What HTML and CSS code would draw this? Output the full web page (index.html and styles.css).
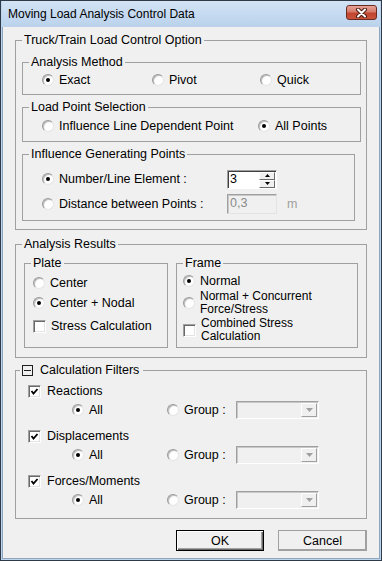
FILE: index.html
```html
<!DOCTYPE html>
<html lang="en">
<head>
    <meta charset="UTF-8">
    <title>Moving Load Analysis Control Data</title>
    <link rel="stylesheet" href="styles.css">
</head>
<body>
    <div class="window">
        <div class="titlebar">
            <span class="title">Moving Load Analysis Control Data</span>
            <span class="close">
                <svg width="13" height="10" viewBox="0 0 13 10">
                    <path d="M3 1.5 L10 8.5 M10 1.5 L3 8.5" stroke="#4a1a12" stroke-width="4" stroke-linecap="round"/>
                    <path d="M3 1.5 L10 8.5 M10 1.5 L3 8.5" stroke="#fff" stroke-width="2" stroke-linecap="round"/>
                </svg>
            </span>
        </div>

        <div class="client">
            <!-- Truck/Train -->
            <div class="group g-truck">
                <div class="group-title">Truck/Train Load Control Option</div>

                <div class="group g-method">
                    <div class="group-title">Analysis Method</div>
                    <div class="row method-row">
                        <span class="opt"><span class="radio on"></span>Exact</span>
                        <span class="opt"><span class="radio"></span>Pivot</span>
                        <span class="opt"><span class="radio"></span>Quick</span>
                    </div>
                </div>

                <div class="group g-loadpt">
                    <div class="group-title">Load Point Selection</div>
                    <div class="row loadpt-row">
                        <span class="opt"><span class="radio"></span>Influence Line Dependent Point</span>
                        <span class="opt"><span class="radio on"></span>All Points</span>
                    </div>
                </div>

                <div class="group g-infl">
                    <div class="group-title">Influence Generating Points</div>
                    <div class="infl-row first">
                        <span class="opt"><span class="radio on"></span>Number/Line Element :</span>
                        <span class="spin">
                            <span class="spin-val">3</span>
                            <span class="spin-btns">
                                <span class="spin-btn"><svg width="5" height="3" viewBox="0 0 5 3"><path d="M2.5 0 L5 3 L0 3 Z" fill="#000"/></svg></span>
                                <span class="spin-btn"><svg width="5" height="3" viewBox="0 0 5 3"><path d="M0 0 L5 0 L2.5 3 Z" fill="#000"/></svg></span>
                            </span>
                        </span>
                    </div>
                    <div class="infl-row">
                        <span class="opt"><span class="radio"></span>Distance between Points :</span>
                        <span class="edit-off">0,3</span>
                        <span class="unit">m</span>
                    </div>
                </div>
            </div>

            <!-- Analysis Results -->
            <div class="group g-results">
                <div class="group-title">Analysis Results</div>
                <div class="results-cols">
                    <div class="group g-plate">
                        <div class="group-title">Plate</div>
                        <div class="opt plate-center"><span class="radio"></span>Center</div>
                        <div class="opt plate-nodal"><span class="radio on"></span>Center + Nodal</div>
                        <div class="opt plate-stress"><span class="check"></span>Stress Calculation</div>
                    </div>
                    <div class="group g-frame">
                        <div class="group-title">Frame</div>
                        <div class="opt frame-normal"><span class="radio on"></span>Normal</div>
                        <div class="opt two-line">
                            <span class="radio"></span>
                            <span class="lines"><span class="line">Normal + Concurrent</span><span class="line">Force/Stress</span></span>
                        </div>
                        <div class="opt two-line second">
                            <span class="check"></span>
                            <span class="lines"><span class="line">Combined Stress</span><span class="line">Calculation</span></span>
                        </div>
                    </div>
                </div>
            </div>

            <!-- Calculation Filters -->
            <div class="group g-filter">
                <div class="group-title filter-title"><span class="collapse"></span>Calculation Filters</div>

                <div class="opt filter-check first"><span class="check on"><svg width="9" height="9" viewBox="0 0 9 9"><path d="M1.5 4 L3.5 6.5 L7.5 2" fill="none" stroke="#000" stroke-width="1.8"/></svg></span>Reactions</div>
                <div class="filter-opts">
                    <span class="opt"><span class="radio on"></span>All</span>
                    <span class="opt"><span class="radio"></span>Group :</span>
                    <span class="combo"><span class="combo-btn"><svg width="7" height="4" viewBox="0 0 7 4"><path d="M0 0 L7 0 L3.5 4 Z" fill="#a0a0a0"/></svg></span></span>
                </div>

                <div class="opt filter-check"><span class="check on"><svg width="9" height="9" viewBox="0 0 9 9"><path d="M1.5 4 L3.5 6.5 L7.5 2" fill="none" stroke="#000" stroke-width="1.8"/></svg></span>Displacements</div>
                <div class="filter-opts">
                    <span class="opt"><span class="radio on"></span>All</span>
                    <span class="opt"><span class="radio"></span>Group :</span>
                    <span class="combo"><span class="combo-btn"><svg width="7" height="4" viewBox="0 0 7 4"><path d="M0 0 L7 0 L3.5 4 Z" fill="#a0a0a0"/></svg></span></span>
                </div>

                <div class="opt filter-check"><span class="check on"><svg width="9" height="9" viewBox="0 0 9 9"><path d="M1.5 4 L3.5 6.5 L7.5 2" fill="none" stroke="#000" stroke-width="1.8"/></svg></span>Forces/Moments</div>
                <div class="filter-opts">
                    <span class="opt"><span class="radio on"></span>All</span>
                    <span class="opt"><span class="radio"></span>Group :</span>
                    <span class="combo"><span class="combo-btn"><svg width="7" height="4" viewBox="0 0 7 4"><path d="M0 0 L7 0 L3.5 4 Z" fill="#a0a0a0"/></svg></span></span>
                </div>
            </div>

            <div class="buttons">
                <button class="btn btn-default">OK</button>
                <button class="btn btn-cancel">Cancel</button>
            </div>
        </div>
    </div>
</body>
</html>
```

FILE: styles.css
```css
* {
    box-sizing: border-box;
}

body {
    margin: 0;
    font-family: "Liberation Sans", Arial, sans-serif;
    font-size: 12.5px;
    color: #000;
    background: #fff;
}

.window {
    width: 382px;
    height: 561px;
    display: flex;
    flex-direction: column;
    padding: 0 1px 1px;
    border: 1px solid #2e3a47;
    background: #bcd4ed;
}

.titlebar {
    height: 26px;
    display: flex;
    align-items: center;
    padding-left: 6px;
    background: linear-gradient(#d2e3f5, #bad2ec);
}

.title {
    font-size: 12px;
}

.close {
    align-self: flex-start;
    width: 31px;
    height: 15px;
    margin: 4px 3px 0 auto;
    display: flex;
    align-items: center;
    justify-content: center;
    border: 1px solid #6b2a20;
    border-radius: 3px;
    background: linear-gradient(#e5a497, #d57a69 45%, #c2462f 55%, #c9533b);
}

.client {
    flex: 1;
    background: #f0f0f0;
    border: 1px solid #8fa5bc;
    border-top: none;
}

/* group boxes */
.group {
    border: 1px solid #a0a0a0;
}

.group-title {
    display: table;
    margin: -8px 0 0 6px;
    padding: 0 2px;
    line-height: 15px;
    background: #f0f0f0;
}

.opt {
    display: flex;
    align-items: center;
    height: 14px;
    line-height: 14px;
    white-space: nowrap;
}

.radio {
    position: relative;
    flex: none;
    width: 12px;
    height: 12px;
    margin-right: 5px;
    border-radius: 50%;
    border: 1px solid;
    border-color: #9a9a9a #e6e6e6 #e6e6e6 #9a9a9a;
    background: radial-gradient(circle at 60% 60%, #fff 40%, #ececec);
    box-shadow: inset 1px 1px 0 #bdbdbd;
}

.radio.on::after {
    content: "";
    position: absolute;
    left: 3px;
    top: 3px;
    width: 4px;
    height: 4px;
    border-radius: 50%;
    background: #000;
}

.check {
    flex: none;
    width: 13px;
    height: 13px;
    margin-right: 5px;
    display: flex;
    align-items: center;
    justify-content: center;
    border: 1px solid;
    border-color: #a0a0a0 #fff #fff #a0a0a0;
    box-shadow: inset 1px 1px 0 #696969, inset -1px -1px 0 #e3e3e3;
    background: #fff;
}

/* truck / train */
.g-truck {
    margin: 13px 12px 0;
    padding-bottom: 8px;
}

.g-method {
    margin: 14px 5px 0 6px;
    padding-bottom: 7px;
}

.method-row {
    display: grid;
    grid-template-columns: 110px 108px auto;
    margin-top: 3px;
    padding-left: 19px;
}

.g-loadpt {
    margin: 12px 5px 0 6px;
    padding-bottom: 8px;
}

.loadpt-row {
    display: grid;
    grid-template-columns: 216px auto;
    margin-top: 4px;
    padding-left: 19px;
}

.g-infl {
    margin: 12px 11px 0 6px;
    padding-bottom: 6px;
}

.infl-row {
    display: grid;
    grid-template-columns: 185px 50px auto;
    align-items: center;
    height: 20px;
    margin-top: 5px;
    padding-left: 19px;
}

.infl-row.first {
    margin-top: 7px;
}

.spin {
    display: flex;
    width: 50px;
    height: 19px;
    border: 1px solid;
    border-color: #a0a0a0 #fff #fff #a0a0a0;
    box-shadow: inset 1px 1px 0 #404040;
    background: #fff;
}

.spin-val {
    flex: 1;
    padding: 1px 0 0 2px;
    line-height: 15px;
}

.spin-btns {
    width: 17px;
    display: flex;
    flex-direction: column;
    padding: 1px 1px 0 0;
}

.spin-btn {
    flex: 1;
    display: flex;
    align-items: center;
    justify-content: center;
    border: 1px solid;
    border-color: #fff #696969 #696969 #fff;
    background: #f0f0f0;
}

.edit-off {
    width: 50px;
    height: 20px;
    padding-left: 2px;
    line-height: 17px;
    color: #8a8a8a;
    border: 1px solid;
    border-color: #a0a0a0 #e3e3e3 #e3e3e3 #a0a0a0;
    box-shadow: inset 1px 1px 0 #c8c8c8;
    background: #f0f0f0;
}

.unit {
    margin-left: 10px;
    color: #a0a0a0;
}

/* analysis results */
.g-results {
    margin: 14px 12px 0;
    padding-bottom: 9px;
}

.results-cols {
    display: flex;
    gap: 8px;
    margin: 11px 8px 0;
}

.g-plate {
    width: 144px;
    height: 85px;
}

.g-frame {
    flex: 1;
    height: 85px;
}

.g-plate .opt {
    padding-left: 8px;
}

.g-frame .opt {
    padding-left: 6px;
}

.plate-center {
    margin-top: 5px;
}

.plate-nodal {
    margin-top: 6px;
}

.plate-stress {
    margin-top: 9px;
}

.frame-normal {
    margin-top: 3px;
}

.opt.two-line {
    height: 26px;
    margin-top: 2px;
}

.opt.two-line.second {
    margin-top: 1px;
}

.lines {
    display: flex;
    flex-direction: column;
}

.line {
    height: 13px;
    line-height: 13px;
    font-size: 12px;
}

/* calculation filters */
.g-filter {
    margin: 12px 12px 0;
    padding-bottom: 8px;
}

.filter-title {
    display: flex;
    align-items: center;
    width: fit-content;
    margin-left: 4px;
    padding: 0 4px 0 2px;
}

.collapse {
    position: relative;
    width: 11px;
    height: 11px;
    margin-right: 7px;
    border: 1px solid #1e1e1e;
}

.collapse::after {
    content: "";
    position: absolute;
    left: 1px;
    right: 1px;
    top: 4px;
    height: 1px;
    background: #1e1e1e;
}

.filter-check {
    margin-top: 9px;
    padding-left: 12px;
}

.filter-check.first {
    margin-top: 6px;
}

.filter-check .check {
    margin-right: 6px;
}

.filter-opts {
    display: grid;
    grid-template-columns: 95px 69px 83px;
    align-items: center;
    height: 20px;
    margin-top: 2px;
    padding-left: 56px;
}

.combo {
    display: flex;
    justify-content: flex-end;
    width: 83px;
    height: 18px;
    padding: 1px;
    border: 1px solid;
    border-color: #a0a0a0 #fff #fff #a0a0a0;
    box-shadow: inset 1px 1px 0 #c8c8c8;
    background: #f0f0f0;
}

.combo-btn {
    width: 16px;
    display: flex;
    align-items: center;
    justify-content: center;
    border: 1px solid;
    border-color: #fff #a0a0a0 #a0a0a0 #fff;
    background: #f0f0f0;
}

/* buttons */
.buttons {
    display: flex;
    justify-content: flex-end;
    gap: 14px;
    margin: 11px 12px 0;
}

.btn {
    width: 88px;
    height: 21px;
    padding: 0;
    font-family: inherit;
    font-size: 12.5px;
    color: #000;
    background: #f0f0f0;
}

.btn-default {
    border: 1px solid #000;
    box-shadow: inset 1px 1px 0 #fff, inset -1px -1px 0 #696969, inset -2px -2px 0 #a0a0a0;
}

.btn-cancel {
    width: 89px;
    border: 1px solid;
    border-color: #fff #696969 #696969 #fff;
    box-shadow: inset -1px -1px 0 #a0a0a0;
    outline: 1px solid #a0a0a0;
    outline-offset: -1px;
}
```
